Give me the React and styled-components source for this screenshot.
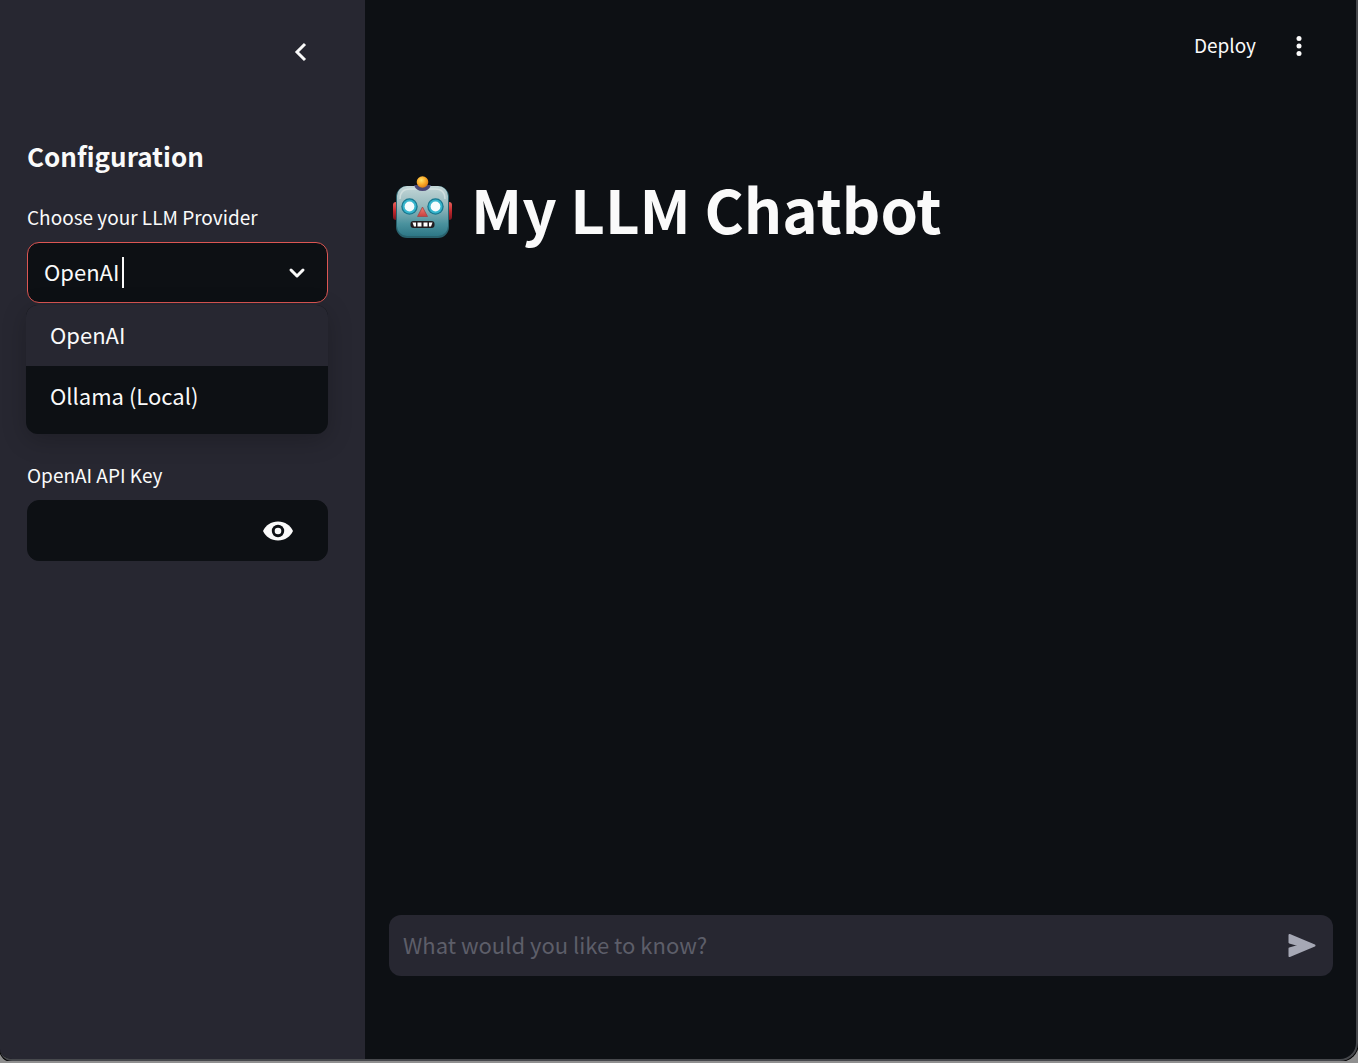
import React, { useState } from "react";
import styled, { createGlobalStyle } from "styled-components";

const ink = "#0d1014";
const panel = "#272731";
const text = "#fafafa";

const GlobalStyle = createGlobalStyle`
  *, *::before, *::after { box-sizing: border-box; }
  body {
    margin: 0;
    background: #8f8f8f;
    color: ${text};
    font-family: "Noto Sans CJK SC", "Noto Sans", sans-serif;
    overflow: hidden;
  }
  button, input { font: inherit; color: inherit; }
`;

const Frame = styled.div`
  display: flex;
  height: calc(100vh - 2px);
  border: solid #46484c;
  border-width: 0 2px 2px 0;
  border-radius: 0 0 18px 12px;
  box-shadow: 0 0 0 1px #000;
  background: ${ink};
  overflow: hidden;
`;

const Sidebar = styled.aside`
  flex: 0 0 365px;
  min-width: 0;
  padding: 32px 37px 32px 27px;
  background: ${panel};
`;

const SidebarHeader = styled.div`
  display: flex;
  justify-content: flex-end;
  padding-right: 8px;
  margin-bottom: 64px;
`;

const IconButton = styled.button`
  display: grid;
  place-items: center;
  flex: none;
  width: ${(p) => p.$size || 40}px;
  height: 40px;
  padding: 0;
  border: 0;
  background: transparent;
  cursor: pointer;
`;

const SidebarTitle = styled.h2`
  margin: 0 0 25px;
  font-size: 26px;
  line-height: 40px;
  font-weight: 700;
`;

const Field = styled.div`
  position: relative;
  margin-bottom: 156px;
`;

const Label = styled.label`
  display: block;
  margin-bottom: 9px;
  font-size: 19px;
  line-height: 32px;
`;

const Control = styled.div`
  display: flex;
  align-items: center;
  height: 61px;
  padding: 0 16px;
  border: 1px solid ${(p) => (p.$active ? "#dc5653" : ink)};
  border-radius: 12px;
  background: ${ink};
`;

const TextInput = styled.input`
  flex: 1;
  width: 100%;
  min-width: 0;
  padding: 0 0 4px;
  border: 0;
  outline: 0;
  background: transparent;
  font-size: 22px;
  line-height: 32px;
`;

const ComboInput = styled(TextInput)`
  flex: none;
  width: auto;
  field-sizing: content;
  caret-color: transparent;
`;

const Caret = styled.span`
  width: 2px;
  height: 31px;
  margin: 0 auto 0 3px;
  background: ${text};
`;

const Menu = styled.ul`
  position: absolute;
  top: 100%;
  left: -1px;
  right: 0;
  margin: 2px 0 0;
  padding: 0 0 7px;
  list-style: none;
  overflow: hidden;
  border-radius: 12px;
  background: ${ink};
  box-shadow: 0 6px 24px rgba(0, 0, 0, 0.22);
`;

const Option = styled.li`
  padding: 13px 24px 15px;
  font-size: 22px;
  line-height: 33px;
  background: ${(p) => (p.$selected ? panel : "transparent")};
  cursor: pointer;
`;

const Main = styled.main`
  display: flex;
  flex-direction: column;
  flex: 1;
  min-width: 0;
  padding: 26px 23px 83px 24px;
`;

const Toolbar = styled.header`
  display: flex;
  justify-content: flex-end;
  align-items: center;
  gap: 23px;
  padding-right: 14px;
`;

const DeployButton = styled.button`
  padding: 0 0 2px;
  border: 0;
  background: transparent;
  font-size: 19px;
  line-height: 38px;
  cursor: pointer;
`;

const Title = styled.h1`
  display: flex;
  align-items: center;
  gap: 18px;
  margin: 104px 0 0 4px;
  font-size: 60px;
  line-height: 76px;
  font-weight: 700;
`;

const ChatBar = styled.form`
  display: flex;
  align-items: center;
  height: 61px;
  margin-top: auto;
  padding: 0 11px 0 14px;
  border-radius: 12px;
  background: ${panel};
`;

const ChatInput = styled(TextInput)`
  &::placeholder { color: #5d5e69; opacity: 1; }
`;

const Robot = () => (
  <svg width="60" height="64" viewBox="0 0 60 64" role="img" aria-label="Robot">
    <defs>
      <linearGradient id="face" x1="0" y1="0" x2="0" y2="1">
        <stop offset="0" stopColor="#c3d6d7" />
        <stop offset="0.4" stopColor="#96b9bd" />
        <stop offset="0.75" stopColor="#4b929e" />
        <stop offset="1" stopColor="#2d7786" />
      </linearGradient>
      <radialGradient id="bulb" cx="0.4" cy="0.35" r="0.7">
        <stop offset="0" stopColor="#ffe36b" />
        <stop offset="0.5" stopColor="#fbad2b" />
        <stop offset="1" stopColor="#d97713" />
      </radialGradient>
      <linearGradient id="ear" x1="0" y1="0" x2="0" y2="1">
        <stop offset="0" stopColor="#e8625c" />
        <stop offset="0.5" stopColor="#c2282d" />
        <stop offset="1" stopColor="#76141d" />
      </linearGradient>
      <linearGradient id="nose" x1="0" y1="0" x2="0" y2="1">
        <stop offset="0" stopColor="#f08070" />
        <stop offset="1" stopColor="#c93f3f" />
      </linearGradient>
    </defs>
    <rect x="0" y="26" width="8" height="18" rx="3" fill="url(#ear)" />
    <rect x="51" y="26" width="8" height="18" rx="3" fill="url(#ear)" />
    <rect x="3" y="10" width="53" height="52" rx="11" fill="#28616d" />
    <rect x="4" y="10" width="51" height="50" rx="10" fill="url(#face)" />
    <path d="M7 23Q7 13 17 13H42Q52 13 52 23" fill="none" stroke="#dce7e6" strokeWidth="1.5" opacity="0.7" />
    <path d="M21 9H38Q36 15 29.500 15T21 9Z" fill="#4a4775" />
    <circle cx="29.500" cy="6" r="5.800" fill="url(#bulb)" />
    {[16.5, 42.5].map((x) => (
      <g key={x}>
        <circle cx={x} cy="30.500" r="8.200" fill="#18788f" />
        <circle cx={x} cy="30.500" r="6.900" fill="#35b4cc" />
        <circle cx={x} cy="30.500" r="4.900" fill="#f5fcfd" />
      </g>
    ))}
    <path d="M29.500 31L34.500 40.500H24.500Z" fill="url(#nose)" stroke="#9f4648" strokeWidth="0.8" strokeLinejoin="round" />
    <rect x="17.500" y="45" width="24" height="7" rx="3" fill="#211d20" />
    <path d="M19.500 46.500h3.500v4h-2zM24.500 46.500h4v4h-4zM30.500 46.500h4v4h-4zM36 46.500h3.500l-1.500 4h-2z" fill="#fff" />
  </svg>
);

const ChevronLeft = () => (
  <svg width="14" height="20" viewBox="0 0 14 20" fill="none" stroke={text} strokeWidth="3">
    <path d="M12 2L4 10L12 18" />
  </svg>
);

const ChevronDown = () => (
  <svg width="18" height="12" viewBox="0 0 18 12" fill="none" stroke={text} strokeWidth="3" strokeLinecap="round" strokeLinejoin="round">
    <path d="M3 3L9 9L15 3" />
  </svg>
);

const Eye = () => (
  <svg width="32" height="22" viewBox="0 0 32 22">
    <path d="M16 1.500C9 1.500 3.500 5.500 1 11C3.500 16.500 9 20.500 16 20.500S28.500 16.500 31 11C28.500 5.500 23 1.500 16 1.500Z" fill={text} />
    <circle cx="16" cy="11" r="6.200" fill={ink} />
    <circle cx="16" cy="11" r="3.300" fill={text} />
  </svg>
);

const Dots = () => (
  <svg width="6" height="22" viewBox="0 0 6 22" fill={text}>
    <circle cx="3" cy="3.500" r="2.500" />
    <circle cx="3" cy="11" r="2.500" />
    <circle cx="3" cy="18.500" r="2.500" />
  </svg>
);

const Send = () => (
  <svg width="28" height="25" viewBox="0 0 28 25">
    <path d="M1.500 2L26.500 12.500L1.500 23V15.500L12 12.500L1.500 9.500Z" fill="#a6a8b5" stroke="#a6a8b5" strokeWidth="2" strokeLinejoin="round" />
  </svg>
);

const providers = ["OpenAI", "Ollama (Local)"];

export default function App() {
  const [provider, setProvider] = useState("OpenAI");
  return (
    <>
      <GlobalStyle />
      <Frame>
        <Sidebar>
          <SidebarHeader>
            <IconButton type="button" aria-label="Collapse sidebar"><ChevronLeft /></IconButton>
          </SidebarHeader>
          <SidebarTitle>Configuration</SidebarTitle>
          <Field>
            <Label htmlFor="provider">Choose your LLM Provider</Label>
            <Control $active>
              <ComboInput
                id="provider"
                role="combobox"
                aria-expanded="true"
                aria-controls="providers"
                value={provider}
                onChange={(e) => setProvider(e.target.value)}
              />
              <Caret />
              <IconButton type="button" $size={28} aria-label="Toggle providers"><ChevronDown /></IconButton>
            </Control>
            <Menu id="providers" role="listbox">
              {providers.map((name) => (
                <Option key={name} role="option" aria-selected={name === provider} $selected={name === provider} onClick={() => setProvider(name)}>
                  {name}
                </Option>
              ))}
            </Menu>
          </Field>
          <Label htmlFor="api-key">OpenAI API Key</Label>
          <Control>
            <TextInput id="api-key" type="password" />
            <IconButton type="button" $size={66} aria-label="Show key"><Eye /></IconButton>
          </Control>
        </Sidebar>
        <Main>
          <Toolbar>
            <DeployButton type="button">Deploy</DeployButton>
            <IconButton type="button" aria-label="Main menu"><Dots /></IconButton>
          </Toolbar>
          <Title><Robot />My LLM Chatbot</Title>
          <ChatBar onSubmit={(e) => e.preventDefault()}>
            <ChatInput type="text" aria-label="Message" placeholder="What would you like to know?" />
            <IconButton type="submit" aria-label="Send"><Send /></IconButton>
          </ChatBar>
        </Main>
      </Frame>
    </>
  );
}
